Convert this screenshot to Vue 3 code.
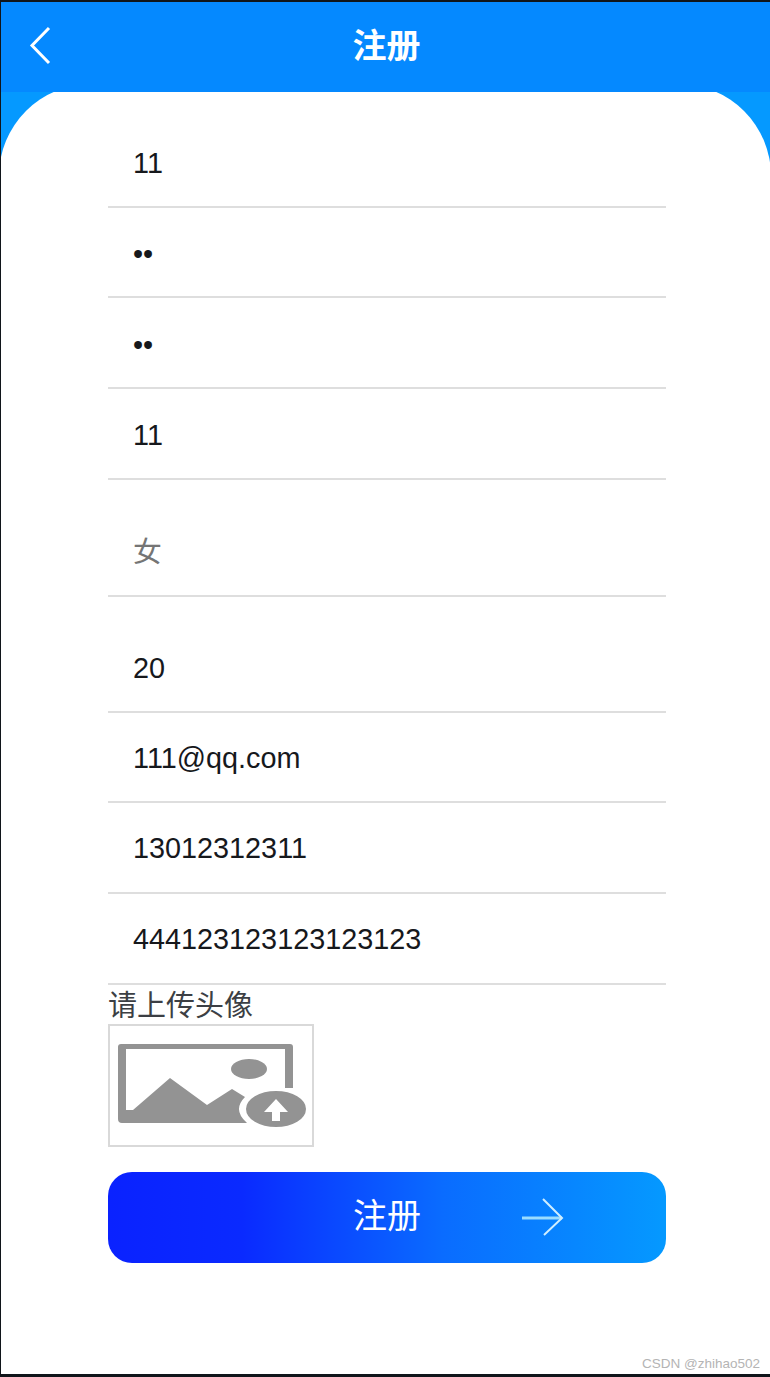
<template>
  <div class="page">
    <header class="nav">
      <svg class="back" width="26" height="40" viewBox="0 0 26 40" fill="none">
        <path d="M24 2 L7 19.5 L24 37" stroke="#fff" stroke-width="3" />
      </svg>
      <span class="title">注册</span>
    </header>
    <div class="backdrop">
      <main class="card">
        <div class="form">
          <div
            v-for="f in fields"
            :key="f.id"
            class="row"
            :class="f.id"
          >
            <span>{{ f.value }}</span>
          </div>
          <div class="upload-label">请上传头像</div>
          <div class="upload">
            <svg width="202" height="119" viewBox="0 0 202 119">
              <path
                fill="#939393"
                d="M11 18 H180 Q183 18 183 21 V62 H175 V23 H16 V84 H23 L60 52 L97 79 L122 63 L135 71 Q122 84 137 97 H12 Q8 97 8 93 V21 Q8 18 11 18 Z"
              />
              <ellipse cx="139" cy="43" rx="18" ry="10" fill="#939393" />
              <ellipse cx="166" cy="83" rx="30" ry="18" fill="#939393" />
              <path fill="#fff" d="M166 73 L178 86 H170 V95 H162 V86 H154 Z" />
            </svg>
          </div>
          <button class="submit" type="button">
            <span>注册</span>
            <svg class="arrow" width="44" height="40" viewBox="0 0 44 40" fill="none">
              <path d="M0 20 H40" stroke="#9adcff" stroke-width="3" />
              <path d="M21 1 L40 20 L22 37" stroke="#cfeeff" stroke-width="2" />
            </svg>
          </button>
        </div>
      </main>
    </div>
    <span class="mark">CSDN @zhihao502</span>
  </div>
</template>

<script setup>
const fields = [
  { id: 'account', value: '11' },
  { id: 'password', value: '••' },
  { id: 'confirm', value: '••' },
  { id: 'name', value: '11' },
  { id: 'gender', value: '女' },
  { id: 'age', value: '20' },
  { id: 'email', value: '111@qq.com' },
  { id: 'phone', value: '13012312311' },
  { id: 'idcard', value: '444123123123123123' },
]
</script>

<style>
html, body { margin: 0; background: #fff; }
</style>

<style scoped>
.page {
  position: relative;
  box-sizing: border-box;
  width: 770px;
  height: 1377px;
  overflow: hidden;
  display: flex;
  flex-direction: column;
  border-top: 2px solid #10151a;
  border-bottom: 3px solid #10151a;
  border-left: 1px solid #10151a;
  font-family: "Liberation Sans", "Noto Sans CJK SC", sans-serif;
}
.nav {
  flex: none;
  position: relative;
  z-index: 1;
  height: 90px;
  background: #0589ff;
  display: flex;
  align-items: center;
  justify-content: center;
}
.back {
  position: absolute;
  left: 24px;
  top: 24px;
}
.title {
  color: #fff;
  font-size: 34px;
  font-weight: 700;
  margin: 0 0 8px 2px;
}
.backdrop {
  flex: 1;
  background: #0599ff;
}
.card {
  box-sizing: border-box;
  height: calc(100% + 8px);
  margin: -8px -1px 0 -2px;
  background: #fff;
  border-radius: 92px 92px 0 0;
  padding: 0 105px 0 109px;
}
.form {
  display: flex;
  flex-direction: column;
}
.row {
  box-sizing: border-box;
  height: 90.7px;
  border-bottom: 2px solid #dedede;
  padding: 2px 0 0 25px;
  display: flex;
  align-items: center;
  font-size: 28.8px;
  color: #16181c;
}
.row.account {
  height: 123.6px;
  padding-top: 38px;
}
.row.password,
.row.confirm {
  padding-top: 6px;
}
.row.name {
  padding-top: 4px;
}
.row.gender {
  height: 117px;
  padding-top: 25px;
  color: #757575;
}
.row.age {
  height: 116px;
  padding-top: 30px;
}
.upload-label {
  font-size: 29px;
  line-height: 35px;
  padding-top: 4px;
  color: #3c3f44;
  white-space: nowrap;
}
.upload {
  box-sizing: border-box;
  width: 206px;
  height: 123px;
  border: 2px solid #d9d9d9;
}
.upload svg {
  display: block;
}
.submit {
  position: relative;
  margin-top: 25px;
  width: 558px;
  height: 91px;
  border: 0;
  padding: 0 0 8px;
  border-radius: 24px;
  background: linear-gradient(90deg, #0a22ff 0%, #0a2aff 24%, #0a6cff 60%, #0599ff 100%);
  color: #fff;
  font-family: inherit;
  font-size: 34px;
}
.arrow {
  position: absolute;
  left: 414px;
  top: 26px;
}
.mark {
  position: absolute;
  right: 10px;
  bottom: 3px;
  font-size: 13.5px;
  color: #b4b4b4;
}
</style>
